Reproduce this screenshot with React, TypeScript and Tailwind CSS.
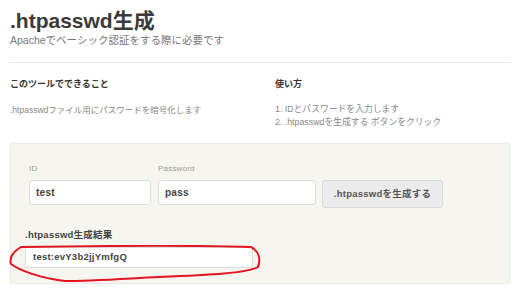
import React from 'react';

const font = { fontFamily: '"Liberation Sans", "Noto Sans CJK JP", sans-serif' };

export default function App() {
  return (
    <div className="w-[520px] h-[300px] bg-white overflow-hidden" style={font}>
      <div className="px-[10px] pt-[8px]">
        <h1 className="text-[21px] leading-[26px] font-bold text-[#3a3a3a]">.htpasswd生成</h1>
        <p className="text-[10.5px] leading-[12px] text-[#777]">Apacheでベーシック認証をする際に必要です</p>

        <div className="mt-[16px] border-t border-[#e6e6e6]" />

        <div className="flex mt-[14px]">
          <div className="w-[265px]">
            <h2 className="text-[9px] leading-[14px] font-bold text-[#333]">このツールでできること</h2>
            <p className="mt-[12px] text-[8.5px] leading-[14px] text-[#888]">.htpasswdファイル用にパスワードを暗号化します</p>
          </div>
          <div>
            <h2 className="text-[9px] leading-[14px] font-bold text-[#333]">使い方</h2>
            <ol className="mt-[12px] text-[8.8px] leading-[13px] text-[#888]">
              <li>1. IDとパスワードを入力します</li>
              <li>2. .htpasswdを生成する ボタンをクリック</li>
            </ol>
          </div>
        </div>

        <div className="mt-[14px] h-[141px] bg-[#f6f5ef] border border-[#ebeae4] rounded-[2px] shadow-[0_0_2px_rgba(0,0,0,0.06)] pt-[20px] px-[14px]">
          <div className="flex items-end pl-[4px]">
            <div>
              <label className="block text-[8px] leading-[10px] text-[#999] tracking-wide">ID</label>
              <div className="mt-[6px] w-[122px] h-[25px] bg-white border border-[#dcdcdc] rounded-[3px] px-[6px] flex items-center text-[10px] font-bold text-[#444] tracking-wide">test</div>
            </div>
            <div className="ml-[7px]">
              <label className="block text-[8px] leading-[10px] text-[#999] tracking-wide">Password</label>
              <div className="mt-[6px] w-[158px] h-[25px] bg-white border border-[#dcdcdc] rounded-[3px] px-[6px] flex items-center text-[10px] font-bold text-[#444] tracking-wide">pass</div>
            </div>
            <button className="ml-[6px] mb-[-3px] w-[121px] h-[28px] bg-[#ebebeb] border border-[#dadada] rounded-[3px] text-[9.5px] text-[#555] font-semibold tracking-wide">.htpasswdを生成する</button>
          </div>

          <h3 className="mt-[24px] text-[9.5px] leading-[12px] font-bold text-[#444] tracking-wide">.htpasswd生成結果</h3>
          <div className="relative mt-[6px]">
            <div className="w-[228px] h-[21px] bg-white border border-[#dcdcdc] rounded-[2px] px-[7px] flex items-center text-[9.5px] font-bold text-[#444] tracking-wide">test:evY3b2jjYmfgQ</div>
            <svg className="absolute left-[-16px] top-[-2px]" width="252" height="42" viewBox="0 0 252 42">
              <path
                d="M 12 2 C 80 1, 180 0, 242 2 C 250 6, 252 14, 249 22 C 240 28, 200 30, 150 32 C 110 34, 80 36, 56 36 C 30 33, 10 25, 2 19 C 0 13, 4 7, 12 2"
                fill="none"
                stroke="#e3141f"
                strokeWidth="2"
                strokeLinecap="round"
              />
            </svg>
          </div>
        </div>
      </div>
    </div>
  );
}
